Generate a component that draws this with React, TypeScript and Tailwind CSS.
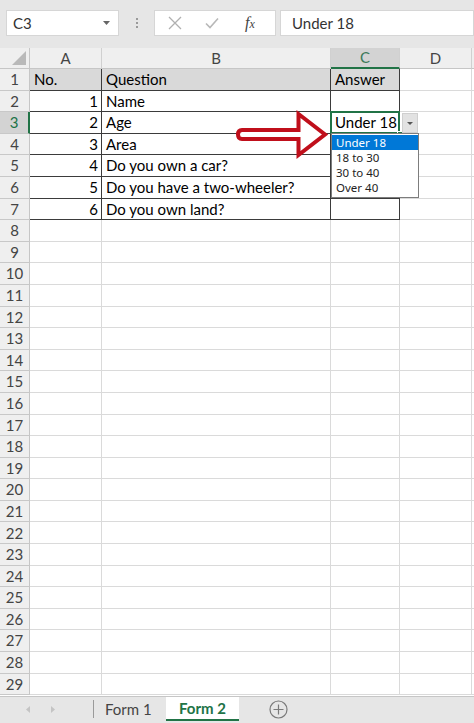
import React from "react";

const COLS = [
  { key: "A", w: 72 },
  { key: "B", w: 229 },
  { key: "C", w: 69 },
  { key: "D", w: 72 },
  { key: "E", w: 60 },
];

const DATA = [
  ["No.", "Question", "Answer"],
  ["1", "Name", ""],
  ["2", "Age", "Under 18"],
  ["3", "Area", ""],
  ["4", "Do you own a car?", ""],
  ["5", "Do you have a two-wheeler?", ""],
  ["6", "Do you own land?", ""],
];

const OPTIONS = ["Under 18", "18 to 30", "30 to 40", "Over 40"];

function Toolbar() {
  return (
    <div className="h-[48px] shrink-0 bg-[#e6e6e6] flex items-start pt-[10px] pl-[6px] gap-0">
      {/* name box */}
      <div className="w-[113px] h-[26px] bg-white border border-[#d6d6d6] flex items-center pl-[6px] pr-[8px] justify-between">
        <span className="text-[15px] text-[#333] font-['Lato',sans-serif]">C3</span>
        <svg width="7" height="4" viewBox="0 0 7 4">
          <path d="M0 0 L7 0 L3.5 4 Z" fill="#666" />
        </svg>
      </div>
      <div className="w-[35px] h-[26px] flex flex-col items-center justify-center gap-[2px]">
        <span className="w-[2px] h-[2px] bg-[#9a9a9a]" />
        <span className="w-[2px] h-[2px] bg-[#9a9a9a]" />
        <span className="w-[2px] h-[2px] bg-[#9a9a9a]" />
      </div>
      {/* formula buttons */}
      <div className="w-[122px] h-[26px] bg-white border border-[#d6d6d6] flex items-center">
        <svg width="14" height="14" viewBox="0 0 14 14" className="ml-[13px]">
          <path d="M1 1 L13 13 M13 1 L1 13" stroke="#b0b0b0" strokeWidth="1.3" />
        </svg>
        <svg width="14" height="12" viewBox="0 0 14 12" className="ml-[23px]">
          <path d="M1 6.5 L5 10.5 L13 1.5" stroke="#b8b8b8" strokeWidth="1.6" fill="none" />
        </svg>
        <span className="ml-[26px] text-[16px] italic text-[#444] font-['Liberation_Serif',serif] leading-none">
          f<span className="text-[12px]">x</span>
        </span>
      </div>
      {/* formula input */}
      <div className="ml-[4px] flex-1 h-[26px] bg-white border border-[#d6d6d6] flex items-center pl-[11px]">
        <span className="text-[15px] text-[#333] font-['Lato',sans-serif]">Under 18</span>
      </div>
    </div>
  );
}

function ColumnHeader() {
  return (
    <div className="h-[21px] shrink-0 flex bg-[#efefef] font-['Lato',sans-serif]">
      <div className="w-[30px] shrink-0 border-r border-b border-[#c6c6c6] flex items-end justify-end pr-[3px] pb-[3px]">
        <svg width="14" height="14" viewBox="0 0 14 14">
          <path d="M14 0 L14 14 L0 14 Z" fill="#b9b9b9" />
        </svg>
      </div>
      {COLS.map((c) => {
        const active = c.key === "C";
        return (
          <div
            key={c.key}
            style={{ width: c.w }}
            className={
              "shrink-0 flex items-center justify-center text-[15px] border-r border-[#d0d0d0] " +
              (active
                ? "bg-[#d3d3d3] text-[#3d7a5a] border-b-2 border-b-[#217346]"
                : "text-[#444] border-b border-b-[#c6c6c6]")
            }
          >
            {c.key === "E" ? "" : c.key}
          </div>
        );
      })}
    </div>
  );
}

function Cell({ r, ci, w }: { r: number; ci: number; w: number }) {
  const inTable = r < 7 && ci < 3;
  const text = inTable ? DATA[r][ci] : "";
  const isHead = r === 0 && ci < 3;
  const right = ci === 0 && r > 0;
  const active = r === 2 && ci === 2;
  let cls = "relative shrink-0 flex items-center text-[15px] text-black whitespace-nowrap ";
  cls += inTable ? "border-r border-b border-[#3b3b3b] " : "border-r border-b border-[#dadada] ";
  if (isHead) cls += "bg-[#d9d9d9] ";
  cls += right ? "justify-end pr-[3px] " : "pl-[4px] ";
  return (
    <div style={{ width: w }} className={cls}>
      {text}
      {active && (
        <>
          <div className="absolute -left-px -top-px -right-px -bottom-px border-2 border-[#217346] pointer-events-none" />
          <div className="absolute -right-[4px] -bottom-[4px] w-[6px] h-[6px] bg-[#217346] border border-white z-10" />
          <div className="absolute left-[71px] top-px w-[16px] h-[20px] bg-[#e2e2e2] border border-[#cfcfcf] flex items-center justify-center z-20">
            <svg width="6" height="3" viewBox="0 0 6 3">
              <path d="M0 0 L6 0 L3 3 Z" fill="#555" />
            </svg>
          </div>
          <div className="absolute left-0 top-[21px] w-[88px] bg-white border border-[#7d7d7d] pt-px pb-[2px] z-30 font-['Noto_Sans',sans-serif]">
            {OPTIONS.map((o, i) => (
              <div
                key={o}
                className={
                  "h-[15px] overflow-hidden pl-[4px] text-[11.5px] leading-[15px] " +
                  (i === 0 ? "bg-[#0078d7] text-white" : "text-[#222]")
                }
              >
                {o}
              </div>
            ))}
          </div>
        </>
      )}
    </div>
  );
}

function Grid() {
  const rows = Array.from({ length: 29 }, (_, i) => i);
  return (
    <div className="flex-1 overflow-hidden font-['Lato',sans-serif]">
      {rows.map((r) => {
        const activeRow = r === 2;
        return (
          <div key={r} className="h-[21.6px] flex">
            <div
              className={
                "w-[30px] shrink-0 flex items-center justify-center text-[15px] border-b border-[#c8c8c8] " +
                (activeRow
                  ? "bg-[#d3d3d3] text-[#217346] border-r-2 border-r-[#217346]"
                  : "bg-[#efefef] text-[#444] border-r border-r-[#c6c6c6]")
              }
            >
              {r + 1}
            </div>
            {COLS.map((c, ci) => (
              <Cell key={c.key} r={r} ci={ci} w={c.w} />
            ))}
          </div>
        );
      })}
    </div>
  );
}

function Tabs() {
  return (
    <div className="h-[27px] shrink-0 bg-[#e6e6e6] border-t border-[#c6c6c6] flex items-start font-['Lato',sans-serif]">
      <div className="w-[93px] h-[25px] flex items-center pl-[26px] gap-[21px]">
        <svg width="4" height="7" viewBox="0 0 4 7">
          <path d="M4 0 L4 7 L0 3.5 Z" fill="#c4c4c4" />
        </svg>
        <svg width="4" height="7" viewBox="0 0 4 7">
          <path d="M0 0 L0 7 L4 3.5 Z" fill="#c4c4c4" />
        </svg>
      </div>
      <div className="w-[73px] h-[24px] flex items-center pl-[12px] text-[15px] text-[#444] relative">
        <span className="absolute left-0 top-[3px] h-[18px] border-l border-[#9a9a9a]" />
        Form 1
      </div>
      <div className="w-[73px] h-[24px] bg-white border-b-2 border-[#217346] flex items-center justify-center text-[15px] font-bold text-[#217346]">
        Form 2
      </div>
      <div className="ml-[30px] h-[25px] flex items-center">
        <svg width="19" height="19" viewBox="0 0 19 19">
          <circle cx="9.5" cy="9.5" r="8.5" fill="none" stroke="#7a7a7a" strokeWidth="1.2" />
          <path d="M9.5 4.5 L9.5 14.5 M4.5 9.5 L14.5 9.5" stroke="#7a7a7a" strokeWidth="1.2" />
        </svg>
      </div>
    </div>
  );
}

export default function App() {
  return (
    <div className="relative w-[474px] h-[723px] overflow-hidden bg-white flex flex-col">
      <Toolbar />
      <ColumnHeader />
      <Grid />
      <Tabs />
      {/* red callout arrow */}
      <svg
        width="98"
        height="52"
        viewBox="0 0 98 52"
        className="absolute left-[234px] top-[109px] z-40"
      >
        <path
          d="M8 21 L64.5 21 L64.5 5 L91 25.5 L64.5 46 L64.5 30 L8 30 Q4 30 4 25.5 Q4 21 8 21 Z"
          fill="white"
          stroke="#c00f1b"
          strokeWidth="4"
          strokeLinejoin="miter"
        />
      </svg>
    </div>
  );
}
